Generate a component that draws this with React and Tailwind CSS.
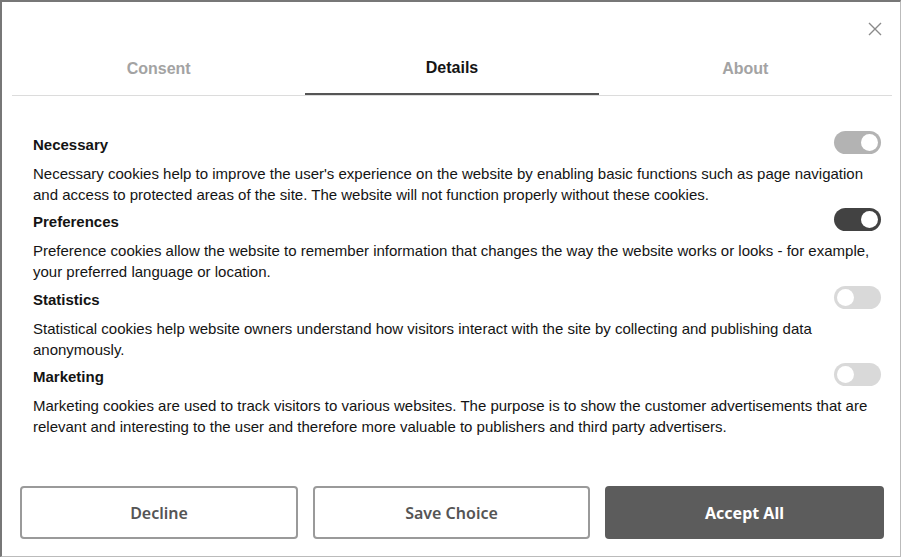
import React from "react";

function Toggle({ state }) {
  const track =
    state === "locked" ? "bg-[#b3b3b3]" : state === "on" ? "bg-[#424242]" : "bg-[#d9d9d9]";
  const justify = state === "off" ? "justify-start" : "justify-end";
  return (
    <div className={`mt-[-2px] w-[47px] h-[23px] rounded-full flex items-center px-[3px] ${track} ${justify}`}>
      <div className="w-[17px] h-[17px] rounded-full bg-white" />
    </div>
  );
}

const sections = [
  {
    title: "Necessary",
    state: "locked",
    text: "Necessary cookies help to improve the user's experience on the website by enabling basic functions such as page navigation and access to protected areas of the site. The website will not function properly without these cookies.",
  },
  {
    title: "Preferences",
    state: "on",
    text: "Preference cookies allow the website to remember information that changes the way the website works or looks - for example, your preferred language or location.",
  },
  {
    title: "Statistics",
    state: "off",
    text: "Statistical cookies help website owners understand how visitors interact with the site by collecting and publishing data anonymously.",
  },
  {
    title: "Marketing",
    state: "off",
    text: "Marketing cookies are used to track visitors to various websites. The purpose is to show the customer advertisements that are relevant and interesting to the user and therefore more valuable to publishers and third party advertisers.",
  },
];

export default function App() {
  return (
    <div
      className="w-[903px] h-[559px] bg-white overflow-hidden"
      style={{ fontFamily: '"Liberation Sans", Arial, sans-serif' }}
    >
      <div className="w-[901px] h-[557px] border-t-2 border-l-2 border-r border-b border-t-[#777] border-l-[#777] border-r-[#bbb] border-b-[#bbb] bg-white flex flex-col">
        {/* close */}
        <div className="h-[42px] flex justify-end items-start pt-[20px] pr-[18px]">
          <svg width="14" height="14" viewBox="0 0 14 14">
            <path d="M1 1 L13 13 M13 1 L1 13" stroke="#8a8a8a" strokeWidth="1.4" />
          </svg>
        </div>
        {/* tabs */}
        <div className="ml-[10px] mr-[8px] flex border-b border-[#dcdcdc]">
          <div className="flex-1 h-[51px] pb-[1px] flex items-center justify-center text-[16px] font-bold text-[#a3a3a3]">
            Consent
          </div>
          <div className="flex-1 h-[51px] pb-[1px] flex items-center justify-center text-[16px] font-bold text-[#141414] border-b-2 border-[#555] mb-[-1px]">
            Details
          </div>
          <div className="flex-1 h-[51px] pb-[1px] flex items-center justify-center text-[16px] font-bold text-[#a3a3a3]">
            About
          </div>
        </div>
        {/* content */}
        <div className="pl-[31px] pr-[19px] pt-[37px] flex flex-col">
          {sections.map((s) => (
            <div key={s.title} className="flex flex-col pb-[5.4px]">
              <div className="h-[24px] flex items-start justify-between">
                <div className="text-[15px] leading-[24px] font-bold text-[#141414]">{s.title}</div>
                <Toggle state={s.state} />
              </div>
              <p className="mt-[6px] text-[15px] leading-[21px] text-[#141414]">{s.text}</p>
            </div>
          ))}
        </div>
        <div className="flex-1" />
        {/* buttons */}
        <div className="flex gap-[15px] pl-[18px] pb-[17px]">
          <button
            className="w-[278px] h-[53px] rounded-[4px] border-2 border-[#9a9a9a] bg-white text-[16px] font-semibold text-[#555]"
            style={{ fontFamily: '"Noto Sans", sans-serif' }}
          >
            Decline
          </button>
          <button
            className="w-[277px] h-[53px] rounded-[4px] border-2 border-[#9a9a9a] bg-white text-[16px] font-semibold text-[#555]"
            style={{ fontFamily: '"Noto Sans", sans-serif' }}
          >
            Save Choice
          </button>
          <button
            className="w-[279px] h-[53px] rounded-[4px] bg-[#5c5c5c] text-[16px] font-bold text-white"
            style={{ fontFamily: '"Noto Sans", sans-serif' }}
          >
            Accept All
          </button>
        </div>
      </div>
    </div>
  );
}
